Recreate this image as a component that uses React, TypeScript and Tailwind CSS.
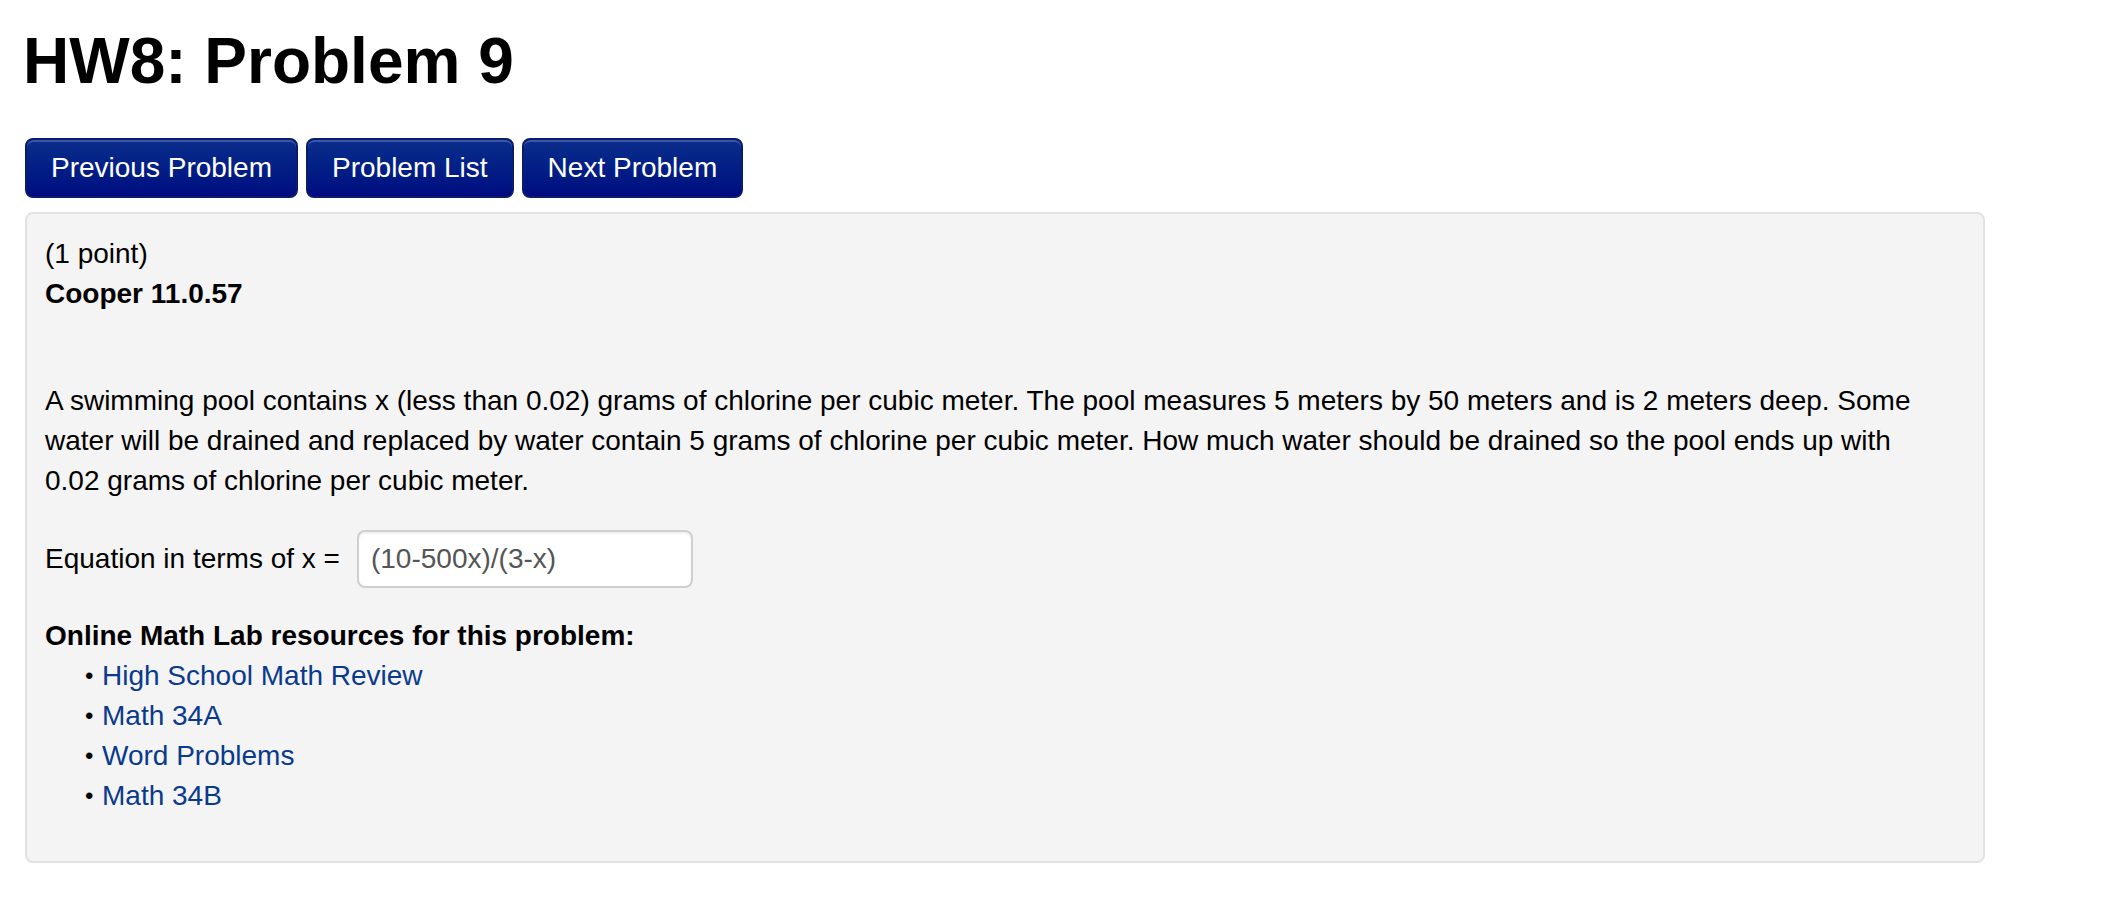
const navButtons = ["Previous Problem", "Problem List", "Next Problem"];

const resources = ["High School Math Review", "Math 34A", "Word Problems", "Math 34B"];

function NavButton({ label }: { label: string }) {
  return (
    <button
      type="button"
      className="h-[60px] rounded-[8px] border-2 border-[#0a1c6a] bg-gradient-to-b from-[#0c2d8b] to-[#000a80] px-[24px] text-[28px] leading-[40px] text-white shadow-[inset_0_2px_0_rgba(140,170,230,0.35)]"
    >
      {label}
    </button>
  );
}

export default function App() {
  return (
    <div className="min-h-screen bg-white px-[25px] font-['Liberation_Sans',Arial,Helvetica,sans-serif] text-black">
      <h1 className="-ml-[2px] pt-[26px] text-[64px] font-bold leading-[70px]">HW8: Problem 9</h1>

      <div className="mt-[42px] flex gap-2">
        {navButtons.map((b) => (
          <NavButton key={b} label={b} />
        ))}
      </div>

      <div className="mt-[14px] h-[651px] w-[1960px] rounded-[8px] border-2 border-[#e2e2e2] bg-[#f4f4f4] pl-[18px] pt-[20px] text-[28px] leading-[40px]">
        <div>(1 point)</div>
        <div className="font-bold">Cooper 11.0.57</div>

        <p className="mt-[67px]">
          A swimming pool contains x (less than 0.02) grams of chlorine per cubic meter. The pool measures 5 meters by 50 meters and is 2 meters deep. Some
          <br />
          water will be drained and replaced by water contain 5 grams of chlorine per cubic meter. How much water should be drained so the pool ends up with
          <br />
          0.02 grams of chlorine per cubic meter.
        </p>

        <div className="mt-[29px] flex items-center">
          <span>Equation in terms of x =</span>
          <input
            type="text"
            defaultValue="(10-500x)/(3-x)"
            className="ml-[17px] h-[58px] w-[336px] rounded-[8px] border-2 border-[#cfcfcf] bg-white px-[12px] text-[28px] text-[#555] shadow-[inset_0_2px_2px_rgba(0,0,0,0.06)] outline-none"
          />
        </div>

        <div className="mt-[28px] font-bold">Online Math Lab resources for this problem:</div>
        <ul>
          {resources.map((r) => (
            <li key={r} className="flex items-center pl-[40px]">
              <span className="w-[17px] text-[24px] leading-[40px]">•</span>
              <a href="#" className="text-[#0a3a8c]">
                {r}
              </a>
            </li>
          ))}
        </ul>
      </div>
    </div>
  );
}
